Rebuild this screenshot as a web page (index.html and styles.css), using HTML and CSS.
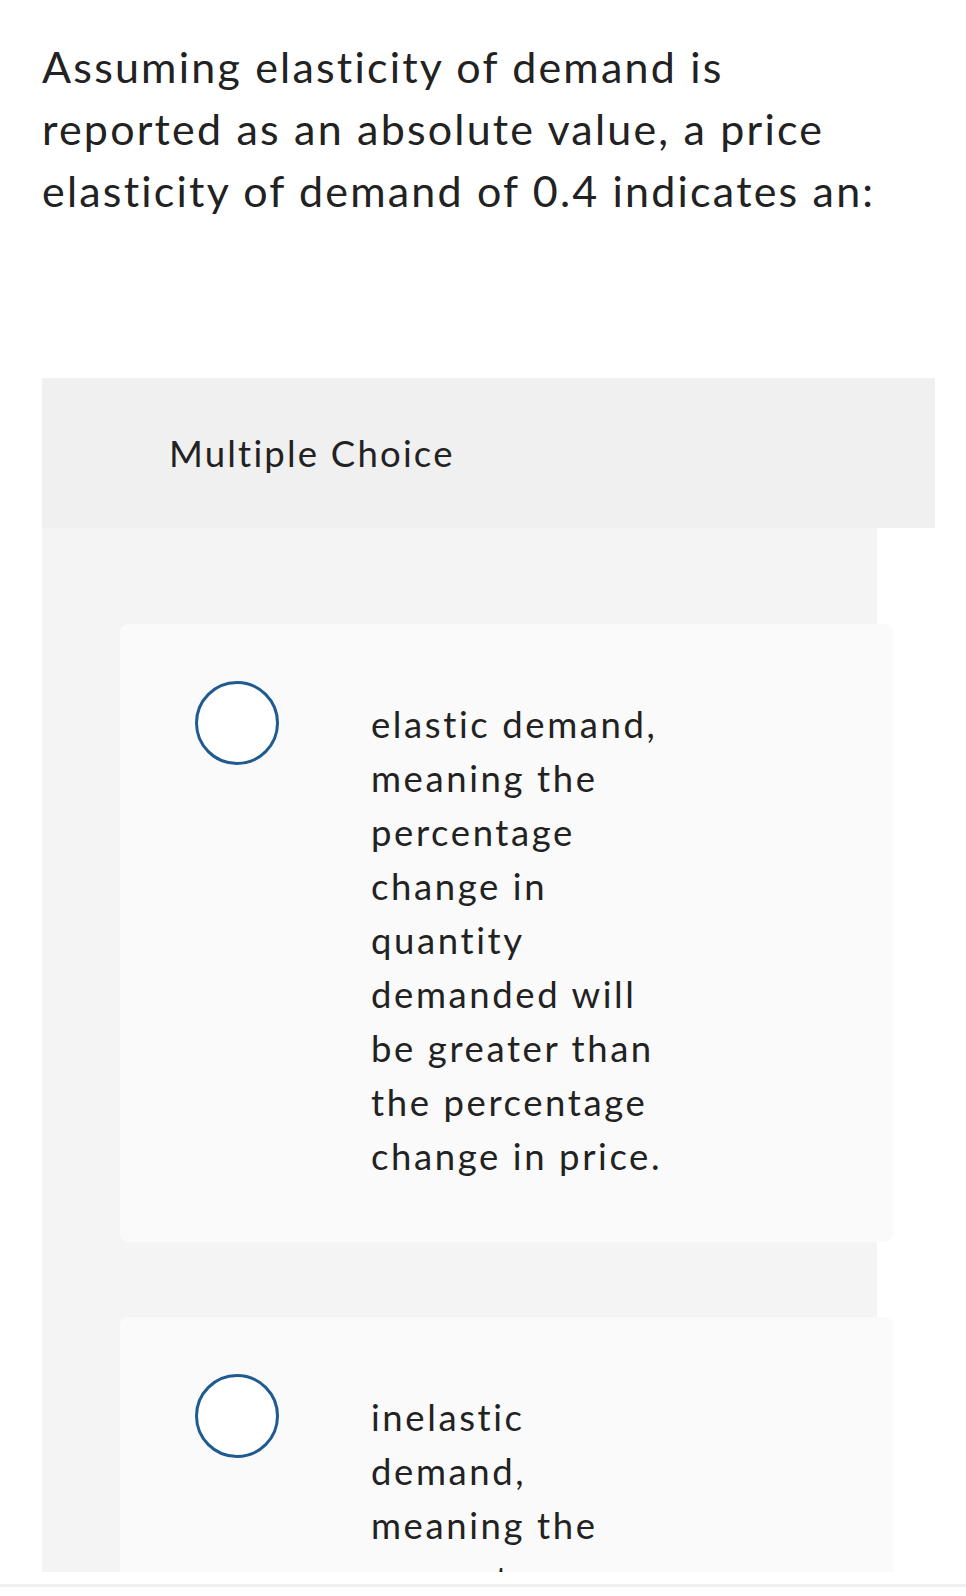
FILE: index.html
```html
<!DOCTYPE html>
<html lang="en">
<head>
<meta charset="utf-8">
<title>Multiple Choice</title>
<link rel="stylesheet" href="styles.css">
</head>
<body>
<div class="page">
  <div class="viewport">
    <p class="prompt">Assuming elasticity of demand is reported as an absolute value, a price elasticity of demand of 0.4 indicates an:</p>
    <section class="mc">
      <div class="mc-head">Multiple Choice</div>
      <div class="mc-body">
        <label class="option">
          <span class="radio"></span>
          <span class="option-text">elastic demand, meaning the percentage change in quantity demanded will be greater than the percentage change in price.</span>
        </label>
        <label class="option">
          <span class="radio"></span>
          <span class="option-text">inelastic demand, meaning the percentage change in quantity demanded will be less than the percentage change in price.</span>
        </label>
      </div>
    </section>
  </div>
  <div class="rule"></div>
</div>
</body>
</html>
```
FILE: styles.css
```css
html, body {
  margin: 0;
  padding: 0;
  background: #ffffff;
}

body {
  font-family: Lato, "Noto Sans", "Liberation Sans", sans-serif;
  color: #222222;
}

.page {
  width: 966px;
  height: 1596px;
  overflow: hidden;
}

.viewport {
  height: 1572px;
  overflow: hidden;
}

.prompt {
  margin: 36px 0 156px 42px;
  width: 842px;
  font-size: 43px;
  line-height: 62px;
  letter-spacing: 2.2px;
}

.mc {
  margin-left: 42px;
  width: 893px;
}

.mc-head {
  height: 150px;
  display: flex;
  align-items: center;
  padding-left: 127px;
  background: #f0f0f0;
  font-size: 36.5px;
  letter-spacing: 2.2px;
}

.mc-body {
  width: 835px;
  padding: 96px 0 0 0;
  background: #f4f4f4;
  display: flex;
  flex-direction: column;
  gap: 75px;
  min-height: 1200px;
}

.option {
  display: flex;
  align-items: flex-start;
  margin-left: 78px;
  width: 773px;
  box-sizing: border-box;
  padding: 57px 0 59px 75px;
  background: #fafafa;
  border-radius: 8px;
}

.radio {
  flex: none;
  width: 84px;
  height: 84px;
  box-sizing: border-box;
  border: 3px solid #1f5b90;
  border-radius: 50%;
  background: #ffffff;
}

.option-text {
  margin: 16px 0 0 92px;
  width: 304px;
  font-size: 36.5px;
  line-height: 54px;
  letter-spacing: 2.6px;
}

.rule {
  margin-top: 12px;
  height: 3px;
  background: #f0f0f0;
}
```
